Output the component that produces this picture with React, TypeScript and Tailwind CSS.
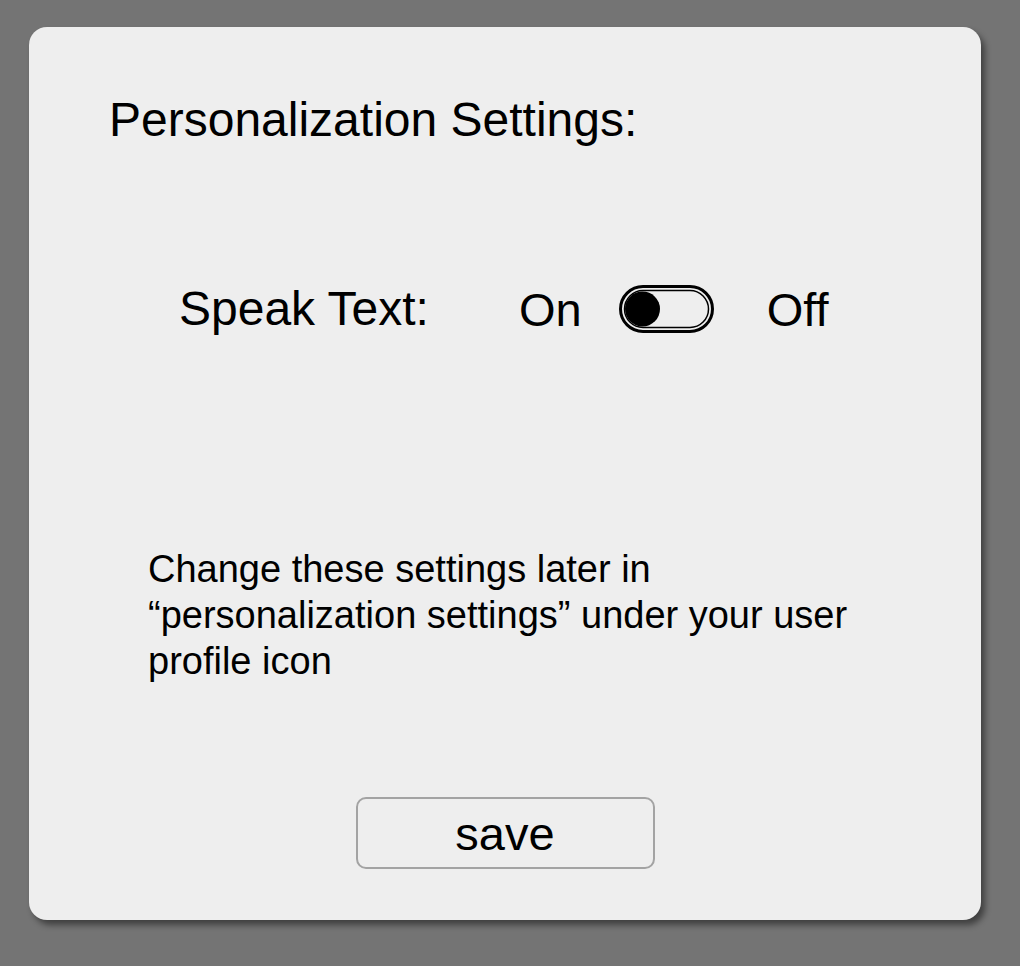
import React, { useState } from "react";

function Toggle({ on, onClick }: { on: boolean; onClick: () => void }) {
  // drawn switch: thick outer pill, thin inner ring, black knob
  return (
    <button onClick={onClick} className="block w-[95px] h-[48px] shrink-0" aria-label="toggle speak text">
      <svg width="95" height="48" viewBox="0 0 95 48">
        <rect x="1.5" y="1.5" width="92" height="45" rx="22.5" fill="#eeeeee" stroke="#000" strokeWidth="3" />
        <rect x="5.5" y="5.5" width="84" height="37" rx="18.5" fill="none" stroke="#000" strokeWidth="1.5" />
        <circle cx={on ? 71.5 : 23.5} cy="24" r="17.5" fill="#000" />
      </svg>
    </button>
  );
}

export default function App() {
  const [speak, setSpeak] = useState(false);

  return (
    <div className="min-h-[966px] bg-[#747474] pt-[27px] pl-[29px] font-['Liberation_Sans',Arial,sans-serif] text-black">
      <div className="w-[952px] h-[893px] bg-[#eeeeee] rounded-[18px] shadow-[4px_5px_6px_rgba(0,0,0,0.45)] flex flex-col">
        <h1 className="mt-[69px] pl-[80px] text-[48px] leading-[48px]">Personalization Settings:</h1>

        {/* Speak text row */}
        <div className="mt-[141px] pl-[150px] flex items-center h-[48px]">
          <span className="text-[48px] leading-[48px]">Speak Text:</span>
          <span className="ml-[90px] text-[47px] leading-[47px]">On</span>
          <span className="ml-[37px]">
            <Toggle on={speak} onClick={() => setSpeak(!speak)} />
          </span>
          <span className="ml-[53px] text-[47px] leading-[47px]">Off</span>
        </div>

        <p className="mt-[213px] pl-[119px] w-[880px] text-[38px] leading-[46px]">
          Change these settings later in “personalization settings” under your user profile icon
        </p>

        <button className="mt-[113px] mx-auto w-[299px] h-[72px] border-2 border-[#a3a3a3] rounded-[10px] text-[47px] leading-none">
          save
        </button>
      </div>
    </div>
  );
}
